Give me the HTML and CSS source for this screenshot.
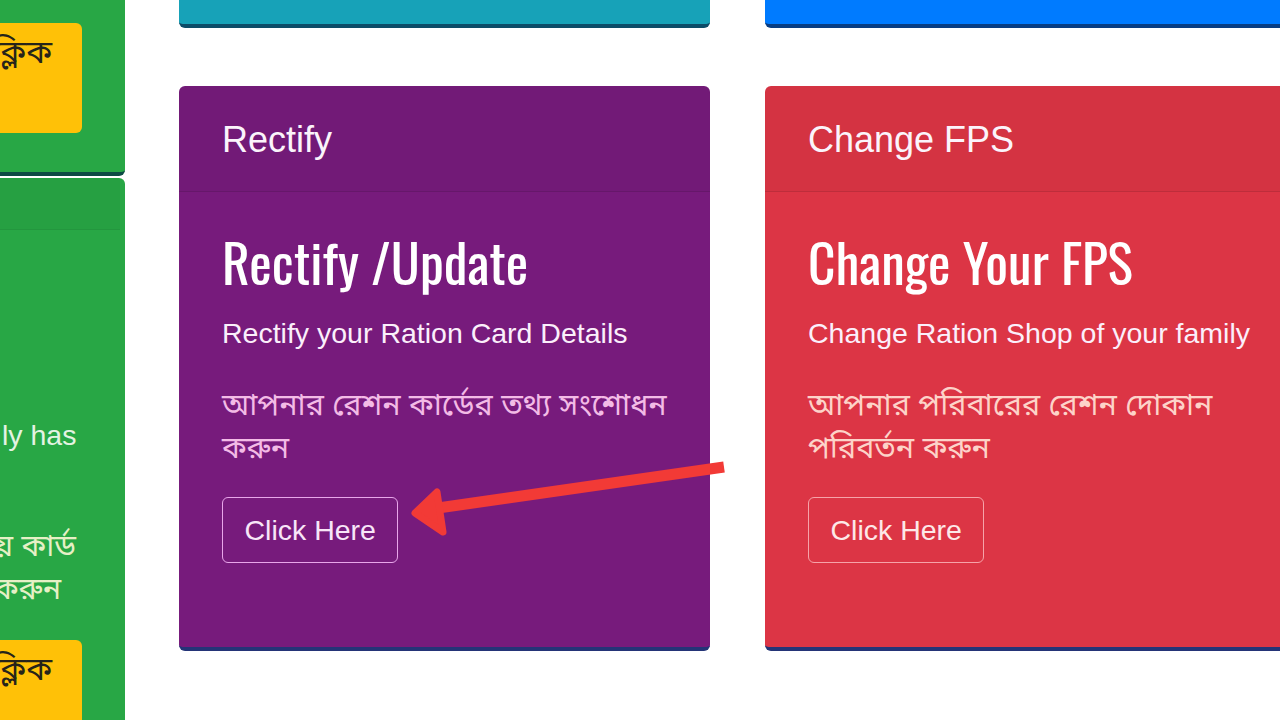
FILE: index.html
```html
<!DOCTYPE html>
<html lang="bn">
<head>
<meta charset="utf-8">
<title>Ration Card Services</title>
<link rel="stylesheet" href="styles.css">
</head>
<body>
<div class="page">
  <aside class="side">
    <div class="side-card side-card-top">
      <div class="side-btn side-btn-top"><span class="side-btn-text">ক্লিক</span></div>
    </div>
    <div class="side-card side-card-main">
      <div class="side-head"></div>
      <div class="side-body">
        <p class="side-en">ly has</p>
        <p class="side-bn"><span class="cut">য় কার্ড</span><br><span class="cut">করুন</span></p>
        <div class="side-btn side-btn-bottom"><span class="side-btn-text">ক্লিক</span></div>
      </div>
    </div>
  </aside>

  <main class="grid">
    <div class="card card-teal card-top"></div>
    <div class="card card-blue card-top"></div>

    <div class="card card-purple">
      <div class="card-header">Rectify</div>
      <div class="card-body">
        <h2 class="card-title">Rectify /Update</h2>
        <p class="card-text">Rectify your Ration Card Details</p>
        <p class="card-text bn">আপনার রেশন কার্ডের তথ্য সংশোধন<br>করুন</p>
        <a class="btn-outline" href="#">Click Here</a>
      </div>
    </div>

    <div class="card card-red">
      <div class="card-header">Change FPS</div>
      <div class="card-body">
        <h2 class="card-title">Change Your FPS</h2>
        <p class="card-text">Change Ration Shop of your family</p>
        <p class="card-text bn">আপনার পরিবারের রেশন দোকান<br>পরিবর্তন করুন</p>
        <a class="btn-outline" href="#">Click Here</a>
      </div>
    </div>
  </main>
</div>

<svg class="arrow" width="1280" height="720" viewBox="0 0 1280 720" aria-hidden="true">
  <line x1="724" y1="467" x2="438" y2="508" stroke="#f23a36" stroke-width="11"/>
  <polygon points="415,513 437,492 443,532" fill="#f23a36" stroke="#f23a36" stroke-width="7" stroke-linejoin="round"/>
</svg>
</body>
</html>
```

FILE: styles.css
```css
* { box-sizing: border-box; }

html, body {
  margin: 0;
  padding: 0;
  width: 1280px;
  height: 720px;
  overflow: hidden;
  background: #ffffff;
  font-family: "Liberation Sans", Arial, "Noto Sans Bengali", "Noto Serif Bengali", "Lohit Bengali", "FreeSans", sans-serif;
  color: #212529;
}

.page {
  display: flex;
  gap: 54px;
  height: 720px;
  overflow: hidden;
}

/* ---------- left (clipped) green column ---------- */
.side {
  flex: none;
  width: 125px;
  height: 720px;
  display: flex;
  flex-direction: column;
  gap: 2px;
  overflow: hidden;
}

.side-card {
  background: #28a745;
}

.side-card-top {
  flex: none;
  height: 176px;
  padding-top: 23px;
  border-bottom: 4px solid #0d4a44;
  border-bottom-right-radius: 6px;
}

.side-card-main {
  flex: none;
  height: 560px;
  border-top-right-radius: 6px;
}

.side-head {
  height: 52px;
  margin-right: 5px;
  background: rgba(0, 0, 0, 0.04);
  border-bottom: 1px solid rgba(0, 0, 0, 0.06);
}

.side-body {
  padding-top: 184px;
}

.side-btn {
  width: 82px;
  background: #ffc107;
  border-radius: 0 6px 6px 0;
  overflow: hidden;
}

.side-btn-top {
  height: 110px;
  padding-top: 8px;
}

.side-btn-bottom {
  height: 110px;
  margin-top: 31px;
  padding-top: 8px;
}

.side-btn-text {
  display: block;
  margin-left: -8px;
  font-size: 32px;
  line-height: 43px;
  color: #26241a;
  white-space: nowrap;
}

.side-en {
  margin: 0;
  padding-left: 2px;
  font-size: 28.5px;
  line-height: 42.75px;
  color: #e4f3e2;
  white-space: nowrap;
}

.side-bn {
  margin: 67px 0 0;
  font-size: 30.5px;
  line-height: 42.75px;
  color: #e6f0c6;
  white-space: nowrap;
}

.side-bn .cut {
  display: inline-block;
  margin-left: -6px;
}

/* ---------- cards grid ---------- */
.grid {
  flex: none;
  display: grid;
  grid-template-columns: 531px 531px;
  column-gap: 55px;
  row-gap: 58px;
  align-content: start;
  margin-top: -272px;
}

.card {
  border-radius: 6px;
  border-bottom: 4px solid #243477;
  overflow: hidden;
  color: #ffffff;
}

.card-top { height: 300px; }

.card-teal { background: #17a2b8; border-bottom-color: #0c4c68; }
.card-blue { background: #007bff; border-bottom-color: #083d82; }

.card-purple { background: #771b7c; height: 565px; }
.card-red { background: #dc3545; height: 565px; }

.card-header {
  height: 106px;
  display: flex;
  align-items: center;
  padding: 3px 43px 0;
  font-size: 36px;
  line-height: 54px;
  background: rgba(0, 0, 0, 0.035);
  border-bottom: 1px solid rgba(0, 0, 0, 0.1);
  color: #fbf4fb;
}

.card-body {
  padding: 35px 43px 0;
}

.card-title {
  margin: 0 0 17px;
  font-family: "Oswald", "Liberation Sans Narrow", "DejaVu Sans Condensed", sans-serif;
  font-weight: 400;
  font-size: 53.5px;
  line-height: 68px;
  color: #ffffff;
  white-space: nowrap;
}

.card-text {
  margin: 0 0 28.5px;
  font-size: 28.5px;
  line-height: 42.75px;
  white-space: nowrap;
  color: #fbeffb;
}

.card-text.bn {
  font-size: 30.5px;
  color: #f3bbe6;
}

.card-red .card-text.bn { color: #fdd3c9; }

.btn-outline {
  display: inline-block;
  padding: 10.5px 21.5px;
  font-size: 28.5px;
  line-height: 42.75px;
  color: #f8e6f8;
  text-decoration: none;
  border: 1px solid #e8a6ea;
  border-radius: 6px;
}

.card-red .btn-outline {
  border-color: #f6a3a9;
  color: #fde8e8;
}

/* ---------- annotation arrow overlay ---------- */
.arrow {
  position: fixed;
  left: 0;
  top: 0;
  pointer-events: none;
}
```
